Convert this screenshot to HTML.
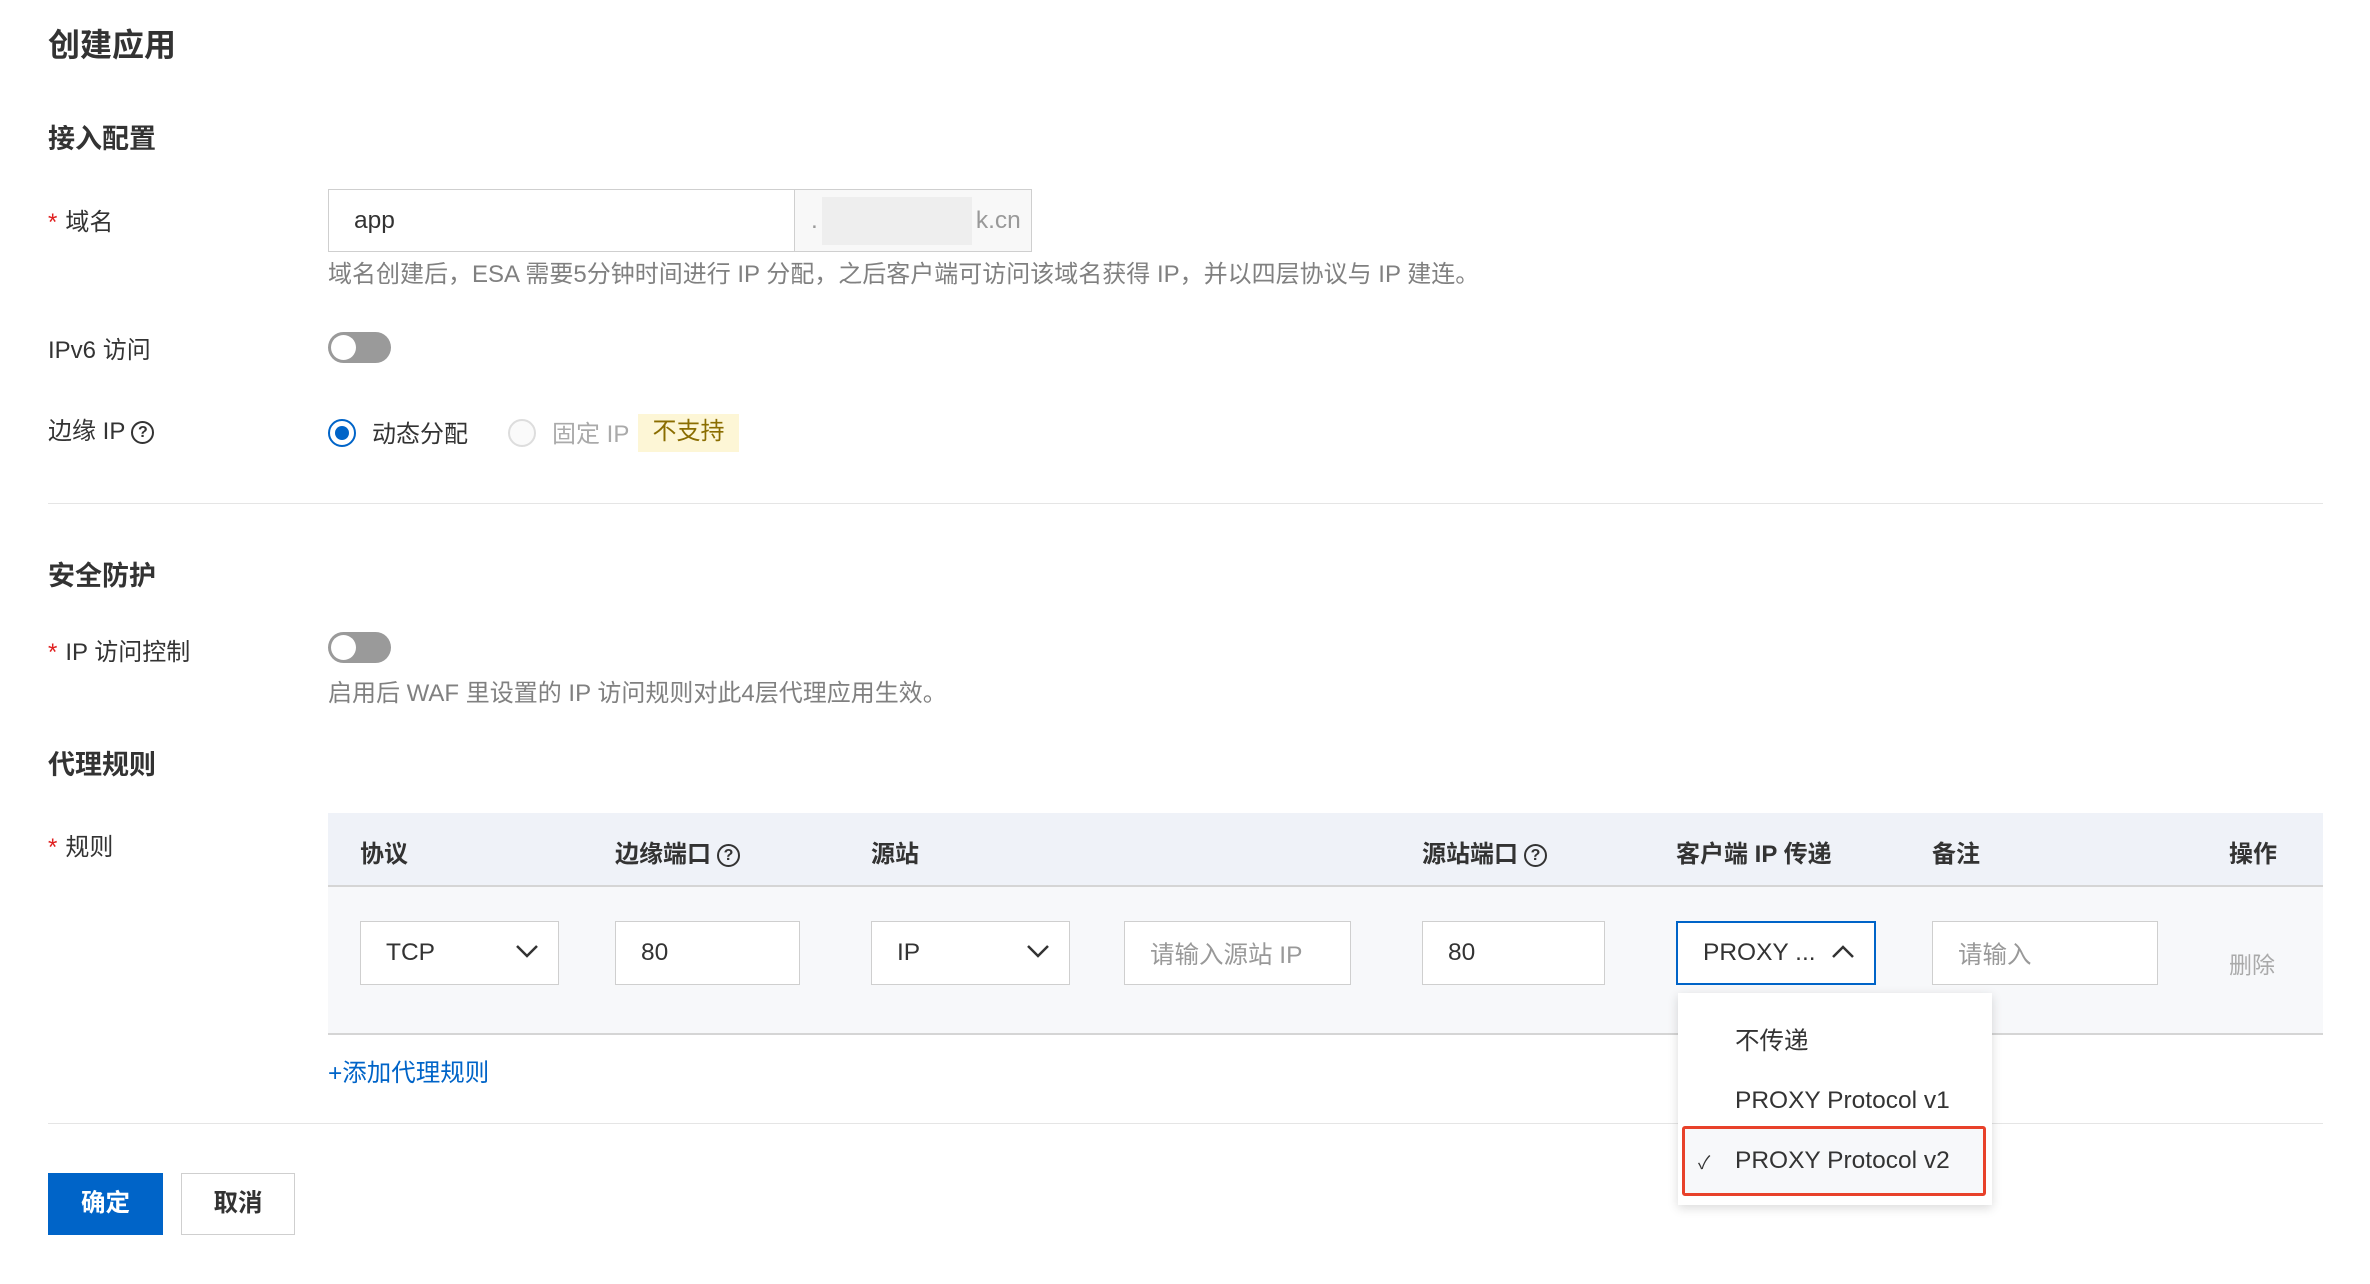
<!DOCTYPE html>
<html><head><meta charset="utf-8"><style>
*{box-sizing:border-box;margin:0;padding:0}
body{width:2370px;height:1284px;background:#fff;position:relative;font-family:"Liberation Sans","Noto Sans CJK SC",sans-serif;color:#333;font-size:24.5px;overflow:hidden}
.a{position:absolute;white-space:nowrap}
.h1{font-size:32px;font-weight:bold;color:#333}
.h2{font-size:27px;font-weight:bold;color:#333}
.lbl{font-size:24px;color:#333}
.req{color:#e02020;margin-right:8px}
.help{font-size:24px;color:#808080}
.tog{position:absolute;width:63px;height:31px;border-radius:16px;background:#9a9a9a}
.tog:after{content:"";position:absolute;left:3px;top:3px;width:25px;height:25px;border-radius:50%;background:#fff}
.box{position:absolute;border:1.5px solid #cfcfcf;background:#fff;height:64px;display:flex;align-items:center;padding-left:25px;font-size:24.5px;color:#333}
.ph{color:#999}
.th{font-size:24px;font-weight:bold;color:#333}
.q{display:inline-block;width:23px;height:23px;border:2px solid #333;border-radius:50%;font-size:16px;text-align:center;line-height:19px;font-weight:bold;vertical-align:middle;margin-left:6px}
.chev{position:absolute;right:20px;top:22px}
</style></head><body>
<div class="a h1" style="left:48px;top:20px">创建应用</div>
<div class="a h2" style="left:48px;top:117px">接入配置</div>
<div class="a lbl" style="left:48px;top:202px"><span class="req">*</span>域名</div>
<div class="box" style="left:328px;top:189px;width:468px;height:63px">app</div>
<div class="box" style="left:794px;top:189px;width:238px;height:63px;background:#f8f8f8;color:#999;padding-left:16px">.<span style="display:inline-block;width:150px;height:48px;background:#eeeeee;margin:0 4px"></span>k.cn</div>
<div class="a help" style="left:328px;top:254px">域名创建后，ESA 需要5分钟时间进行 IP 分配，之后客户端可访问该域名获得 IP，并以四层协议与 IP 建连。</div>
<div class="a lbl" style="left:48px;top:330px">IPv6 访问</div>
<div class="tog" style="left:328px;top:332px"></div>
<div class="a lbl" style="left:48px;top:411px">边缘 IP<span class="q">?</span></div>
<div class="a" style="left:328px;top:419px;width:28px;height:28px;border-radius:50%;border:2px solid #0064c8;background:#fff"><div style="position:absolute;left:5px;top:5px;width:14px;height:14px;border-radius:50%;background:#0064c8"></div></div>
<div class="a lbl" style="left:372px;top:414px">动态分配</div>
<div class="a" style="left:508px;top:419px;width:28px;height:28px;border-radius:50%;border:2px solid #ddd;background:#fafafa"></div>
<div class="a lbl" style="left:552px;top:414px;color:#aaa">固定 IP</div>
<div class="a" style="left:638px;top:414px;width:101px;height:38px;background:#fdf6d6;color:#8a6d00;font-size:24px;text-align:center;line-height:36px">不支持</div>
<div class="a" style="left:48px;top:503px;width:2275px;height:1px;background:#e5e5e5"></div>
<div class="a h2" style="left:48px;top:554px">安全防护</div>
<div class="a lbl" style="left:48px;top:632px"><span class="req">*</span>IP 访问控制</div>
<div class="tog" style="left:328px;top:632px"></div>
<div class="a help" style="left:328px;top:673px">启用后 WAF 里设置的 IP 访问规则对此4层代理应用生效。</div>
<div class="a h2" style="left:48px;top:743px">代理规则</div>
<div class="a lbl" style="left:48px;top:827px"><span class="req">*</span>规则</div>
<div class="a" style="left:328px;top:813px;width:1995px;height:74px;background:#eff2f8;border-bottom:2px solid #d5d5d5"></div>
<div class="a" style="left:328px;top:887px;width:1995px;height:148px;background:#f7f8fa;border-bottom:2px solid #d5d5d5"></div>
<div class="a th" style="left:360px;top:834px">协议</div>
<div class="a th" style="left:615px;top:834px">边缘端口<span class="q">?</span></div>
<div class="a th" style="left:871px;top:834px">源站</div>
<div class="a th" style="left:1422px;top:834px">源站端口<span class="q">?</span></div>
<div class="a th" style="left:1676px;top:834px">客户端 IP 传递</div>
<div class="a th" style="left:1932px;top:834px">备注</div>
<div class="a th" style="left:2229px;top:834px">操作</div>
<div class="box" style="left:360px;top:921px;width:199px">TCP<svg class="chev" width="22" height="14"><path d="M1 2l10 10 10-10" fill="none" stroke="#333" stroke-width="2.5"/></svg></div>
<div class="box" style="left:615px;top:921px;width:185px">80</div>
<div class="box" style="left:871px;top:921px;width:199px">IP<svg class="chev" width="22" height="14"><path d="M1 2l10 10 10-10" fill="none" stroke="#333" stroke-width="2.5"/></svg></div>
<div class="box ph" style="left:1124px;top:921px;width:227px">请输入源站 IP</div>
<div class="box" style="left:1422px;top:921px;width:183px">80</div>
<div class="box" style="left:1676px;top:921px;width:200px;border:2px solid #0064c8">PROXY ...<svg class="chev" width="22" height="14"><path d="M1 12l10-10 10 10" fill="none" stroke="#333" stroke-width="2.5"/></svg></div>
<div class="box ph" style="left:1932px;top:921px;width:226px">请输入</div>
<div class="a" style="left:2229px;top:946px;font-size:23px;color:#aaa">删除</div>
<div class="a" style="left:328px;top:1054px;color:#0064c8;font-size:24.5px">+添加代理规则</div>
<div class="a" style="left:48px;top:1123px;width:2275px;height:1px;background:#e5e5e5"></div>
<div class="a" style="left:48px;top:1173px;width:115px;height:62px;background:#0064c8;color:#fff;font-weight:bold;text-align:center;line-height:62px">确定</div>
<div class="a" style="left:181px;top:1173px;width:114px;height:62px;border:1.5px solid #cfcfcf;background:#fff;color:#333;font-weight:bold;text-align:center;line-height:60px">取消</div>
<div class="a" style="left:1678px;top:993px;width:314px;height:212px;background:#fff;box-shadow:0 3px 10px rgba(0,0,0,.15)">
<div class="a" style="left:57px;top:29px">不传递</div>
<div class="a" style="left:57px;top:94px">PROXY Protocol v1</div>
<div class="a" style="left:4px;top:133px;width:304px;height:70px;border:3px solid #e8412a;border-radius:3px;background:#f7f8fa"></div>
<div class="a" style="left:20px;top:156px;font-size:18px">✓</div>
<div class="a" style="left:57px;top:154px">PROXY Protocol v2</div>
</div>
</body></html>
